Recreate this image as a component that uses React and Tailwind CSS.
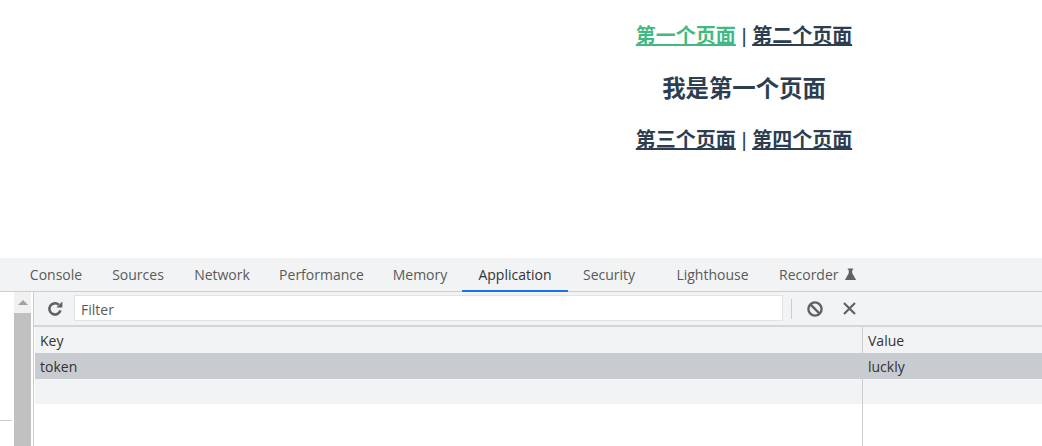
import React from 'react';

const uiFont = { fontFamily: '"Open Sans", "Noto Sans", sans-serif' };

// name + left offset to the next tab comes from the screenshot
const tabs = [
  { name: 'Console', w: 'w-[82px]', ml: 'ml-[15px]' },
  { name: 'Sources', w: 'w-[82px]', ml: '' },
  { name: 'Network', w: 'w-[86px]', ml: '' },
  { name: 'Performance', w: 'w-[113px]', ml: '' },
  { name: 'Memory', w: 'w-[84px]', ml: '' },
  { name: 'Application', w: 'w-[106px]', ml: '', active: true },
  { name: 'Security', w: 'w-[82px]', ml: '' },
  { name: 'Lighthouse', w: 'w-[103px]', ml: 'ml-[11px]' },
];

const PageLink = ({ children, active }) => (
  <a href="#" className={`font-bold underline ${active ? 'text-[#42b983]' : 'text-[#2c3e50]'}`}>
    {children}
  </a>
);

const LinkRow = ({ first, second, active, className }) => (
  <div className={`text-[20px] leading-[28px] text-[#2c3e50] ${className}`}>
    <PageLink active={active}>{first}</PageLink> | <PageLink>{second}</PageLink>
  </div>
);

const App = () => {
  return (
    <div className="flex h-[446px] w-[1042px] flex-col overflow-hidden bg-white" style={uiFont}>
      {/* page content */}
      <div className="flex h-[258px] justify-end">
        <div
          className="flex w-[596px] flex-col items-center pt-[22px]"
          style={{ fontFamily: '"Liberation Sans", "Noto Sans CJK SC", sans-serif' }}
        >
          <LinkRow first="第一个页面" second="第二个页面" active />
          <h3 className="mt-[23px] text-[23.4px] leading-[32px] font-bold text-[#2c3e50]">我是第一个页面</h3>
          <LinkRow first="第三个页面" second="第四个页面" className="mt-[21px]" />
        </div>
      </div>

      {/* devtools tab bar */}
      <div className="flex h-[34px] shrink-0 items-stretch border-b border-[#cbcdd1] bg-[#f1f3f4] text-[14px] text-[#5a5a5a]">
        {tabs.map((tab) => (
          <div
            key={tab.name}
            className={`flex items-center justify-center ${tab.w} ${tab.ml} ${
              tab.active ? 'mb-[-1px] border-b-2 border-[#1a73e8] text-[#333]' : ''
            }`}
          >
            {tab.name}
          </div>
        ))}
        <div className="ml-[15px] flex items-center gap-[5px]">
          Recorder
          <svg width="13" height="13" viewBox="0 0 12 12" fill="#5f6368">
            <path d="M3.5 0.5h5v1.2h-0.9v3.2l3.6 6.1H0.8l3.6-6.1V1.7h-0.9z" />
          </svg>
        </div>
      </div>

      <div className="flex min-h-0 flex-1">
        {/* sidebar stub with scrollbar */}
        <div className="flex h-full w-[34px] shrink-0 border-r border-[#cbcdd1]">
          <div className="h-full w-[12px] pt-[128px]">
            <div className="h-px bg-[#cbcdd1]" />
          </div>
          <div className="ml-[2px] flex h-full w-[17px] flex-col items-center bg-[#f1f1f1]">
            <div className="flex h-[21px] items-center justify-center">
              <div className="h-0 w-0 border-x-[5px] border-b-[5px] border-x-transparent border-b-[#a3a3a3]" />
            </div>
            <div className="w-full flex-1 bg-[#c1c1c1]" />
          </div>
        </div>

        <div className="flex min-w-0 flex-1 flex-col">
          {/* toolbar */}
          <div className="flex h-[35px] shrink-0 items-center border-b-2 border-[#d3d5d8] bg-[#f1f3f4]">
            <svg className="ml-[13px]" width="16" height="16" viewBox="0 0 16 16" fill="none">
              <path d="M13.4 9.4A5.6 5.6 0 1 1 11.8 3.8" stroke="#5f6368" strokeWidth="2.6" />
              <path d="M9.4 6.6h6V0.6z" fill="#5f6368" />
            </svg>
            <div className="mb-[1px] ml-[11px] flex h-[26px] w-[709px] items-center border border-[#e2e3e5] bg-white pl-[6px] text-[14px] text-[#5a5a5a]">
              <span className="mt-[2px]">Filter</span>
            </div>
            <div className="ml-[8px] h-[20px] w-px bg-[#cbcdd1]" />
            <svg className="ml-[15px]" width="16" height="16" viewBox="0 0 16 16" fill="none">
              <circle cx="8" cy="8" r="6.6" stroke="#5f6368" strokeWidth="2.4" />
              <path d="M3.4 3.4l9.2 9.2" stroke="#5f6368" strokeWidth="2.4" />
            </svg>
            <svg className="ml-[20px]" width="13" height="13" viewBox="0 0 13 13" fill="none">
              <path d="M1 1l11 11M12 1L1 12" stroke="#5f6368" strokeWidth="2.2" />
            </svg>
          </div>

          {/* storage table */}
          <div className="ml-px grid flex-1 grid-cols-[827px_1fr] grid-rows-[26px_26px_25px_1fr] text-[14px] text-[#333]">
            <div className="flex items-center bg-[#f1f3f4] pl-[5px]">Key</div>
            <div className="flex items-center border-l border-[#cbcdd1] bg-[#f1f3f4] pl-[5px]">Value</div>
            <div className="flex items-center bg-[#c8cbcf] pl-[5px]">token</div>
            <div className="flex items-center bg-[#c8cbcf] pl-[6px]">luckly</div>
            <div className="bg-[#f1f3f4]" />
            <div className="border-l border-[#cbcdd1] bg-[#f1f3f4]" />
            <div />
            <div className="border-l border-[#cbcdd1]" />
          </div>
        </div>
      </div>
    </div>
  );
};

export default App;
